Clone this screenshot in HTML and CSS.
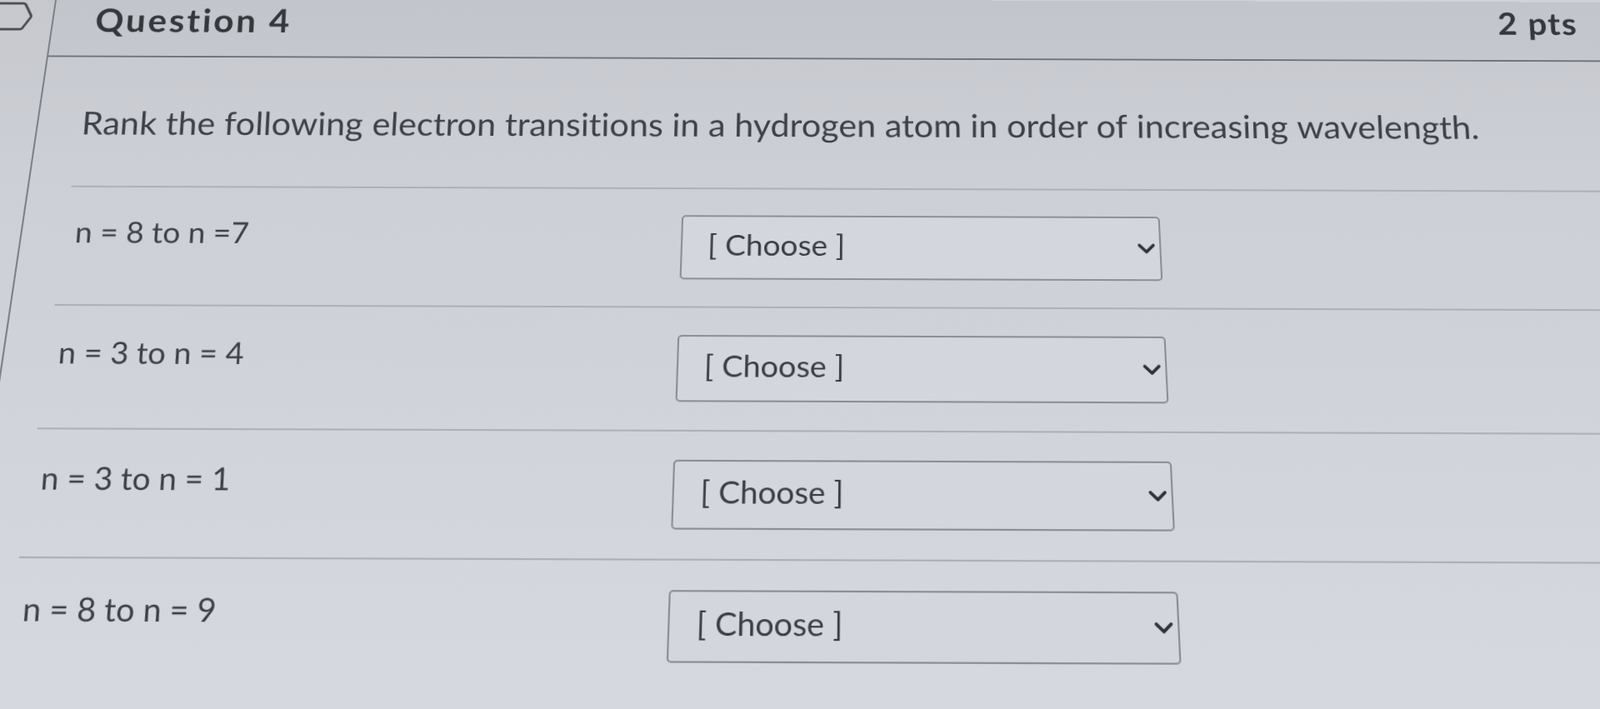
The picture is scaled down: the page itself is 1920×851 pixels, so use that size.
FILE: index.html
```html
<!DOCTYPE html>
<html lang="en">
<head>
<meta charset="utf-8">
<title>Question 4</title>
<link rel="stylesheet" href="styles.css">
</head>
<body>
<div class="viewport">
  <div class="screen">
    <aside class="gutter">
      <svg class="flag" width="44" height="40" viewBox="0 0 44 40" aria-hidden="true">
        <path d="M-10 3 H29 Q31 3 32.2 4.9 L39.8 18.3 Q40.8 20 39.8 21.7 L32.2 35.1 Q31 37 29 37 H-10" fill="none" stroke="#4a4c51" stroke-width="3" stroke-linejoin="round"/>
      </svg>
    </aside>
    <section class="card">
      <header class="card-header">
        <h2 class="title">Question 4</h2>
        <span class="points">2 pts</span>
      </header>
      <div class="card-body">
        <p class="prompt"><span class="chunk chunk-1">Rank the following</span> <span class="chunk chunk-2">electron transitions</span> <span class="chunk chunk-3">in a hydrogen atom</span> <span class="chunk chunk-4">in order of</span> <span class="chunk chunk-5">increasing</span> <span class="chunk chunk-6">wavelength.</span></p>
        <div class="answers">
          <div class="answer-row">
            <span class="label">n = 8 to n =7</span>
            <div class="select"><span class="select-text">[ Choose ]</span><svg class="chevron" width="22" height="14" viewBox="0 0 22 14" aria-hidden="true"><path d="M3 3 L11 11 L19 3" fill="none" stroke="#2f3136" stroke-width="3.6" stroke-linecap="round" stroke-linejoin="round"/></svg></div>
          </div>
          <div class="answer-row">
            <span class="label">n = 3 to n = 4</span>
            <div class="select"><span class="select-text">[ Choose ]</span><svg class="chevron" width="22" height="14" viewBox="0 0 22 14" aria-hidden="true"><path d="M3 3 L11 11 L19 3" fill="none" stroke="#2f3136" stroke-width="3.6" stroke-linecap="round" stroke-linejoin="round"/></svg></div>
          </div>
          <div class="answer-row">
            <span class="label">n = 3 to n = 1</span>
            <div class="select"><span class="select-text">[ Choose ]</span><svg class="chevron" width="22" height="14" viewBox="0 0 22 14" aria-hidden="true"><path d="M3 3 L11 11 L19 3" fill="none" stroke="#2f3136" stroke-width="3.6" stroke-linecap="round" stroke-linejoin="round"/></svg></div>
          </div>
          <div class="answer-row">
            <span class="label">n = 8 to n = 9</span>
            <div class="select"><span class="select-text">[ Choose ]</span><svg class="chevron" width="22" height="14" viewBox="0 0 22 14" aria-hidden="true"><path d="M3 3 L11 11 L19 3" fill="none" stroke="#2f3136" stroke-width="3.6" stroke-linecap="round" stroke-linejoin="round"/></svg></div>
          </div>
        </div>
      </div>
    </section>
  </div>
</div>
</body>
</html>
```

FILE: styles.css
```css
html, body {
  margin: 0;
  padding: 0;
  overflow: hidden;
  background: #cfd2d8;
}

.viewport {
  width: 1920px;
  height: 851px;
  overflow: hidden;
}

/* The whole screen is photographed at an angle: the tilt is one transform on the page wrapper. */
.screen {
  width: 1920px;
  height: 900px;
  display: flex;
  align-items: stretch;
  font-family: Lato, "Noto Sans", sans-serif;
  color: #3a3d43;
  background: linear-gradient(180deg, #c6c8ce 0%, #cccfd5 25%, #d1d4da 60%, #d6d9e0 100%);
  transform-origin: 1030px 0;
  transform: perspective(3109px) rotateX(25deg) rotate(0.2deg);
}

.gutter {
  width: 66px;
  flex: none;
  display: flex;
  align-items: flex-start;
  padding-top: 5px;
  box-sizing: border-box;
}

.flag {
  display: block;
}

.card {
  flex: 1;
  border-left: 2px solid #7d8085;
  display: flex;
  flex-direction: column;
}

.card-header {
  height: 78px;
  box-sizing: border-box;
  border-bottom: 2px solid #6e7176;
  display: flex;
  justify-content: space-between;
  align-items: flex-start;
  padding: 4px 31px 0 50px;
  background: rgba(60, 64, 72, 0.025);
}

.title {
  margin: 0;
  font-size: 42px;
  font-weight: 700;
  letter-spacing: 2.8px;
  line-height: 1.2;
  color: #34373c;
  transform: skewX(3deg);
}

.points {
  display: inline-block;
  font-size: 40px;
  font-weight: 700;
  letter-spacing: 1.5px;
  line-height: 1.2;
  color: #34373c;
  transform: skewX(-3deg);
}

.card-body {
  display: flex;
  flex-direction: column;
}

.prompt {
  margin: 60px 0 55px 51px;
  font-size: 40.3px;
  letter-spacing: 0.05px;
  line-height: 1.2;
  color: #3d4046;
  white-space: nowrap;
}

.chunk {
  display: inline-block;
}

.chunk-1 { transform: skewX(3deg); }
.chunk-2 { transform: skewX(1.7deg); }
.chunk-3 { transform: skewX(0.3deg); }
.chunk-4 { transform: skewX(-0.8deg); }
.chunk-5 { transform: skewX(-1.6deg); }
.chunk-6 { transform: skewX(-2.3deg); }

.answers {
  margin-left: 49px;
  margin-right: 20px;
  display: flex;
  flex-direction: column;
}

.answer-row {
  display: grid;
  grid-template-columns: 710px 552px;
  align-items: start;
  border-top: 2px solid #adb0b6;
  padding: 31px 0 32px 0;
}

.label {
  padding: 3px 0 0 12px;
  font-size: 35.5px;
  line-height: 1.2;
  color: #3d4046;
  justify-self: start;
  transform: skewX(3.4deg);
}

.select {
  margin-top: 1px;
  height: 78px;
  box-sizing: border-box;
  border: 2px solid #8c8f95;
  border-radius: 5px;
  background: #d3d6dc;
  display: flex;
  align-items: center;
  justify-content: space-between;
  padding: 0 4px 6px 29px;
}

.select-text {
  font-size: 35.5px;
  line-height: 1.2;
  color: #3a3d43;
}

.chevron {
  display: block;
  margin-top: 6px;
}
```
